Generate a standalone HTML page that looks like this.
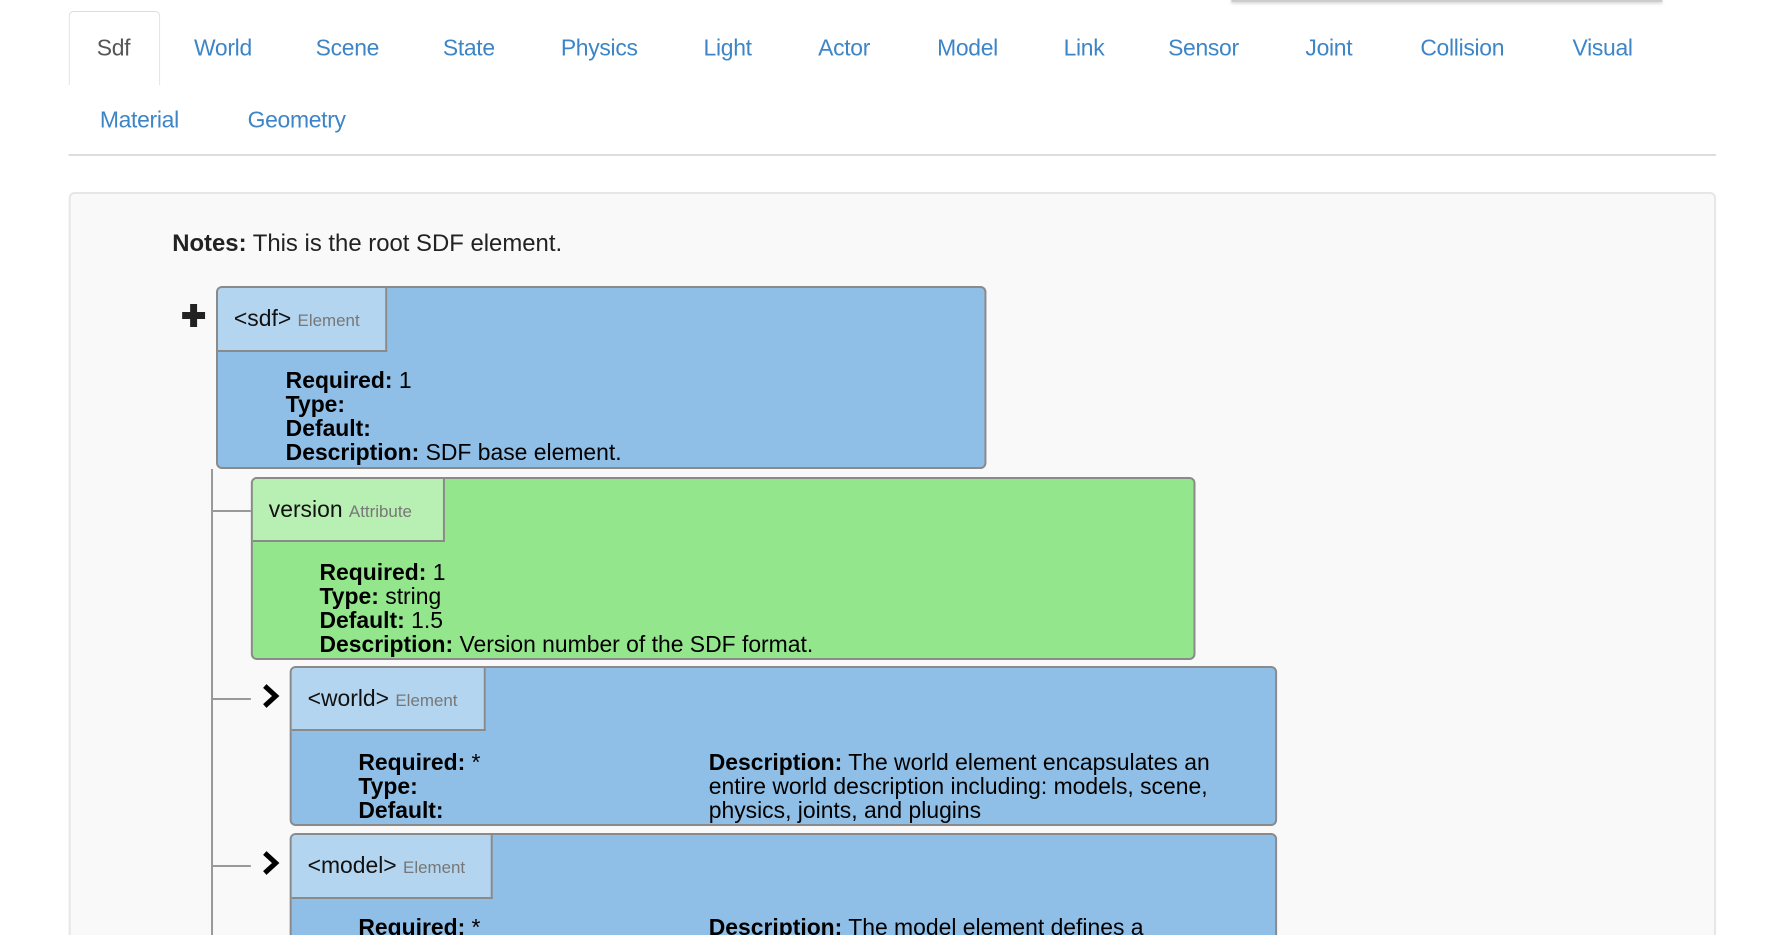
<!DOCTYPE html>
<html style="width:1789px;height:935px;overflow:hidden"><head><meta charset="utf-8"><style>
body{margin:0;width:1789px;height:935px;overflow:hidden;background:#fff;font-family:"Liberation Sans",sans-serif;position:relative}
#w{position:absolute;left:0;top:0;width:1789px;height:935px;transform:scaleX(0.9954);transform-origin:0 0}
.t{position:absolute;font-size:23px;color:#3d85c6;transform:translate(-50%,-50%);white-space:nowrap;letter-spacing:-0.3px}
.abs{position:absolute}
.box{position:absolute;border:2px solid #8a8a8a;border-radius:6px;box-sizing:border-box;overflow:hidden}
.hd{position:absolute;left:0;top:0;box-sizing:border-box;border-right:2px solid #8a8a8a;border-bottom:2px solid #8a8a8a;font-size:23px;color:#111;padding-left:16px;line-height:60px;white-space:nowrap}
.hd small{font-size:17px;color:#777}
.tx{position:absolute;font-size:23px;line-height:24px;color:#000;white-space:nowrap;letter-spacing:0}
.blue{background:#8fbfe7}.blue .hd{background:#b3d5ef}
.green{background:#94e68d}.green .hd{background:#b8efb3}
.hl{position:absolute;height:2px;background:#999}
</style></head><body><div id="w">
<div class="abs" style="left:1237px;top:0;width:433px;height:2px;background:#ccc;box-shadow:0 1px 3px #bbb"></div>
<div class="abs" style="left:69px;top:11px;width:92px;height:74px;border:1px solid #ddd;border-bottom:none;border-radius:5px 5px 0 0;background:#fff;box-sizing:border-box"></div>
<span class="t" style="left:114px;top:48px;color:#555">Sdf</span>
<span class="t" style="left:224px;top:48px">World</span>
<span class="t" style="left:349px;top:48px">Scene</span>
<span class="t" style="left:471px;top:48px">State</span>
<span class="t" style="left:602px;top:48px">Physics</span>
<span class="t" style="left:731px;top:48px">Light</span>
<span class="t" style="left:848px;top:48px">Actor</span>
<span class="t" style="left:972px;top:48px">Model</span>
<span class="t" style="left:1089px;top:48px">Link</span>
<span class="t" style="left:1209px;top:48px">Sensor</span>
<span class="t" style="left:1335px;top:48px">Joint</span>
<span class="t" style="left:1469px;top:48px">Collision</span>
<span class="t" style="left:1610px;top:48px">Visual</span>
<span class="t" style="left:140px;top:120px">Material</span>
<span class="t" style="left:298px;top:120px">Geometry</span>
<div class="abs" style="left:69px;top:154px;width:1655px;height:2px;background:#ddd"></div>

<div class="abs" style="left:69px;top:192px;width:1655px;height:760px;background:#f9f9f9;border:2px solid #e6e6e6;border-radius:6px;box-sizing:border-box"></div>
<div class="tx" style="left:173px;top:232px;font-size:24px;color:#222"><b>Notes:</b> This is the root SDF element.</div>

<div class="abs" style="left:183px;top:312px;width:23px;height:7px;background:#222"></div>
<div class="abs" style="left:191px;top:304px;width:7px;height:23px;background:#222"></div>

<div class="abs" style="left:212px;top:469px;width:2px;height:470px;background:#999"></div>
<div class="hl" style="left:213px;top:510px;width:39px"></div>
<div class="hl" style="left:213px;top:698px;width:39px"></div>
<div class="hl" style="left:213px;top:865px;width:39px"></div>

<div class="box blue" style="left:217px;top:286px;width:774px;height:183px">
 <div class="hd" style="width:170px;height:64px">&lt;sdf&gt; <small>Element</small></div>
 <div class="tx" style="left:68px;top:80px"><b>Required:</b> 1<br><b>Type:</b><br><b>Default:</b><br><b>Description:</b> SDF base element.</div>
</div>

<div class="box green" style="left:252px;top:477px;width:949px;height:183px">
 <div class="hd" style="width:193px;height:63px">version <small>Attribute</small></div>
 <div class="tx" style="left:67px;top:81px"><b>Required:</b> 1<br><b>Type:</b> string<br><b>Default:</b> 1.5<br><b>Description:</b> Version number of the SDF format.</div>
</div>

<svg class="abs" style="left:262px;top:683px" width="20" height="26" viewBox="0 0 20 26"><path d="M4 3 L15 13 L4 23" fill="none" stroke="#000" stroke-width="5"/></svg>
<div class="box blue" style="left:291px;top:666px;width:992px;height:160px">
 <div class="hd" style="width:195px;height:63px">&lt;world&gt; <small>Element</small></div>
 <div class="tx" style="left:67px;top:82px"><b>Required:</b> *<br><b>Type:</b><br><b>Default:</b></div>
 <div class="tx" style="left:419px;top:82px"><b>Description:</b> The world element encapsulates an<br>entire world description including: models, scene,<br>physics, joints, and plugins</div>
</div>

<svg class="abs" style="left:262px;top:850px" width="20" height="26" viewBox="0 0 20 26"><path d="M4 3 L15 13 L4 23" fill="none" stroke="#000" stroke-width="5"/></svg>
<div class="box blue" style="left:291px;top:833px;width:992px;height:140px">
 <div class="hd" style="width:202px;height:64px">&lt;model&gt; <small>Element</small></div>
 <div class="tx" style="left:67px;top:80px"><b>Required:</b> *</div>
 <div class="tx" style="left:419px;top:80px"><b>Description:</b> The model element defines a</div>
</div>
</div></body></html>
